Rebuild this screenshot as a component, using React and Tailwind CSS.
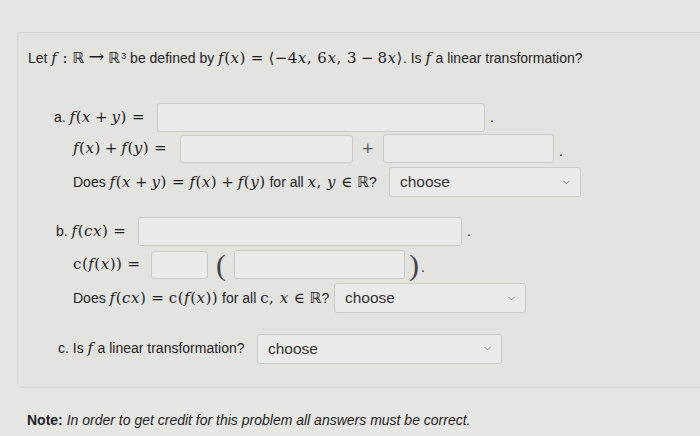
import { ChevronDown } from 'lucide-react'

const sans = { fontFamily: '"Liberation Sans", Arial, sans-serif' }
const serif = { fontFamily: '"DejaVu Serif", "Liberation Serif", serif' }

// math bits: italic letters, upright digits/brackets, spaced operators
function I({ children }) {
  return <span className="italic text-[15px] tracking-[0.5px]" style={serif}>{children}</span>
}
function U({ children, className = '' }) {
  return <span className={`text-[15px] tracking-[0.5px] ${className}`} style={serif}>{children}</span>
}
// relation (=, ∈, →, :) gets thick space, binary op (+, −) medium
const Rel = ({ children }) => <span className="px-[5px] text-[15px]" style={serif}>{children}</span>
const Bin = ({ children }) => <span className="px-[4px] text-[15px]" style={serif}>{children}</span>
const R = () => <span style={{ fontFamily: '"DejaVu Sans", serif' }} className="text-[15px]">ℝ</span>

function Box({ w, h = 'h-[29px]' }) {
  return <div className={`${w} ${h} shrink-0 rounded-[3px] border border-[#c9c9c5] bg-[#ebebe9]`} />
}

function Choose({ w }) {
  return (
    <div className={`${w} h-[30px] shrink-0 rounded-[3px] border border-[#cacac6] bg-[#ebebe9] flex items-center justify-between pl-[10px] pr-[8px]`}>
      <span className="text-[15.5px] text-[#333]">choose</span>
      <ChevronDown size={11} strokeWidth={2} className="text-[#888]" />
    </div>
  )
}

export default function App() {
  return (
    <div className="w-[700px] h-[436px] overflow-hidden bg-[#e6e6e3] text-[#1e1e1e] text-[14px]" style={sans}>
      <div className="ml-[17px] mt-[32px] -mr-4 border border-[#d2d2ce] rounded-[3px] bg-[#e3e3e0] pt-[14px] pl-[10px] pb-[23px]">
        <div className="h-[20px] leading-[20px] whitespace-nowrap">
          Let <I>f</I><Rel>:</Rel><R /><span className="px-[4px] text-[19px] leading-none" style={serif}>→</span><R /><sup className="text-[9px] ml-[1px]">3</sup> be defined by <I>f</I><U>(</U><I>x</I><U>)</U><Rel>=</Rel><U>⟨−4</U><I>x</I><U>, 6</U><I>x</I><U>, 3</U><Bin>−</Bin><U>8</U><I>x</I><U>⟩</U>. Is <I>f</I> a linear transformation?
        </div>

        {/* part a */}
        <div className="mt-[36px] pl-[26px] flex flex-col gap-[2px]">
          <div className="flex items-center h-[29px]">
            <span className="w-[103px] whitespace-nowrap">a. <I>f</I><U>(</U><I>x</I><Bin>+</Bin><I>y</I><U>)</U><Rel>=</Rel></span>
            <Box w="w-[328px]" />
            <span className="ml-[5px]">.</span>
          </div>
          <div className="flex items-center h-[29px] pl-[19px]">
            <span className="w-[107px] whitespace-nowrap"><I>f</I><U>(</U><I>x</I><U>)</U><Bin>+</Bin><I>f</I><U>(</U><I>y</I><U>)</U><Rel>=</Rel></span>
            <Box w="w-[173px]" h="h-[28px]" />
            <U className="w-[30px] text-center text-[#555]">+</U>
            <Box w="w-[171px]" />
            <span className="ml-[5px] mt-[6px]">.</span>
          </div>
          <div className="flex items-center h-[30px] pl-[19px] mt-[2px]">
            <span className="w-[316px] whitespace-nowrap">Does <I>f</I><U>(</U><I>x</I><Bin>+</Bin><I>y</I><U>)</U><Rel>=</Rel><I>f</I><U>(</U><I>x</I><U>)</U><Bin>+</Bin><I>f</I><U>(</U><I>y</I><U>)</U> for all <I>x</I><U>, </U><I>y</I><Rel>∈</Rel><R />?</span>
            <Choose w="w-[192px]" />
          </div>
        </div>

        {/* part b */}
        <div className="mt-[20px] pl-[28px] flex flex-col gap-[4px]">
          <div className="flex items-center h-[29px]">
            <span className="w-[82px] whitespace-nowrap">b. <I>f</I><U>(</U><I>cx</I><U>)</U><Rel>=</Rel></span>
            <Box w="w-[324px]" />
            <span className="ml-[5px]">.</span>
          </div>
          <div className="flex items-center h-[29px] pl-[17px]">
            <span className="w-[78px] whitespace-nowrap"><U>c(</U><I>f</I><U>(</U><I>x</I><U>))</U><Rel>=</Rel></span>
            <Box w="w-[57px]" h="h-[28px]" />
            <span className="w-[26px] text-center text-[30px] leading-none font-light text-[#444]" style={{ fontFamily: '"Liberation Serif", serif' }}>(</span>
            <Box w="w-[171px]" />
            <span className="ml-[4px] text-[30px] leading-none font-light text-[#444]" style={{ fontFamily: '"Liberation Serif", serif' }}>)</span>
            <span className="ml-[2px] mt-[6px]">.</span>
          </div>
          <div className="flex items-center h-[30px] pl-[17px]">
            <span className="w-[261px] whitespace-nowrap">Does <I>f</I><U>(</U><I>cx</I><U>)</U><Rel>=</Rel><U>c(</U><I>f</I><U>(</U><I>x</I><U>))</U> for all <U>c, </U><I>x</I><Rel>∈</Rel><R />?</span>
            <Choose w="w-[192px]" />
          </div>
        </div>

        {/* part c */}
        <div className="mt-[20px] pl-[30px] flex items-center h-[31px]">
          <span className="w-[199px] whitespace-nowrap">c. Is <I>f</I> a linear transformation?</span>
          <Choose w="w-[245px]" />
        </div>
      </div>

      <div className="mt-[22px] ml-[27px] whitespace-nowrap">
        <span className="font-bold">Note:</span> <span className="italic">In order to get credit for this problem all answers must be correct.</span>
      </div>
    </div>
  )
}
